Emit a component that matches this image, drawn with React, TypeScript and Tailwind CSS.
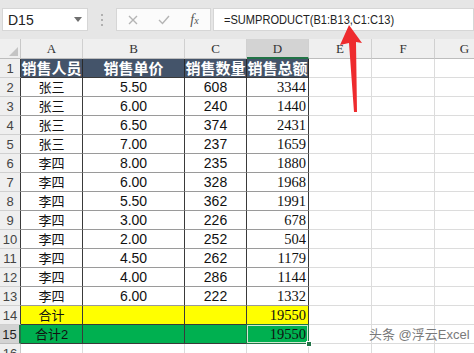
import React from "react";

const A = ["张三", "张三", "张三", "张三", "李四", "李四", "李四", "李四", "李四", "李四", "李四", "李四"];
const B = ["5.50", "6.00", "6.50", "7.00", "8.00", "6.00", "5.50", "3.00", "2.00", "4.50", "4.00", "6.00"];
const C = ["608", "240", "374", "237", "235", "328", "362", "226", "252", "262", "286", "222"];
const D = ["3344", "1440", "2431", "1659", "1880", "1968", "1991", "678", "504", "1179", "1144", "1332"];

const cjk = { fontFamily: '"Liberation Sans", "Noto Sans CJK SC", sans-serif' };
const serif = { fontFamily: '"Liberation Serif", "Noto Sans CJK SC", serif' };
const sans = { fontFamily: '"Liberation Sans", sans-serif' };

function RowHead({ n, table, sel }: { n: number; table: boolean; sel?: boolean }) {
  return (
    <div
      style={sans}
      className={
        "h-[19px] flex items-center justify-center text-[13px] leading-none border-b " +
        (sel
          ? "bg-[#d3d3d3] text-[#222] border-b-[#bdbdbd] border-r-2 border-r-[#217346]"
          : table
          ? "bg-[#efefef] text-[#444] border-b-[#d0d0d0] border-r border-r-[#3a3a3a]"
          : "bg-[#efefef] text-[#444] border-b-[#d0d0d0] border-r border-r-[#c8c8c8]")
      }
    >
      {n}
    </div>
  );
}

function Blank() {
  return <div className="h-[19px] bg-white border-r border-b border-r-[#dcdcdc] border-b-[#dcdcdc]" />;
}

export default function App() {
  const rows: React.ReactNode[] = [];
  // header row 1
  rows.push(<RowHead key="h1" n={1} table />);
  ["销售人员", "销售单价", "销售数量", "销售总额"].forEach((t, i) =>
    rows.push(
      <div
        key={"hd" + i}
        style={cjk}
        className="h-[19px] bg-[#44546a] text-white font-bold text-[15px] leading-none flex items-center justify-center border-r border-b border-r-[#2a2a2a] border-b-[#3a3a3a]"
      >
        {t}
      </div>
    )
  );
  rows.push(<Blank key="h1e" />, <Blank key="h1f" />, <Blank key="h1g" />);

  for (let i = 0; i < 12; i++) {
    rows.push(<RowHead key={"r" + i} n={i + 2} table />);
    rows.push(
      <div key={"a" + i} style={cjk} className="h-[19px] bg-white text-[#111] text-[13px] leading-none flex items-center justify-center border-r border-b border-r-[#3a3a3a] border-b-[#9a9a9a]">
        {A[i]}
      </div>
    );
    rows.push(
      <div key={"b" + i} style={sans} className="h-[19px] bg-white text-[#111] text-[14px] leading-none flex items-center justify-center border-r border-b border-r-[#3a3a3a] border-b-[#9a9a9a]">
        {B[i]}
      </div>
    );
    rows.push(
      <div key={"c" + i} style={sans} className="h-[19px] bg-white text-[#111] text-[14px] leading-none flex items-center justify-center border-r border-b border-r-[#3a3a3a] border-b-[#9a9a9a]">
        {C[i]}
      </div>
    );
    rows.push(
      <div key={"d" + i} style={serif} className="h-[19px] bg-white text-[#111] text-[14.5px] leading-none flex items-center justify-end pr-[2px] border-r border-b border-r-[#3a3a3a] border-b-[#9a9a9a]">
        {D[i]}
      </div>
    );
    rows.push(<Blank key={"e" + i} />, <Blank key={"f" + i} />, <Blank key={"g" + i} />);
  }

  // row 14 yellow
  rows.push(<RowHead key="r14" n={14} table />);
  rows.push(
    <div key="a14" style={cjk} className="h-[19px] bg-[#ffff00] text-[#111] text-[13px] leading-none flex items-center justify-center border-r border-b border-r-[#3a3a3a] border-b-[#3a3a3a]">
      合计
    </div>
  );
  rows.push(<div key="b14" className="h-[19px] bg-[#ffff00] border-r border-b border-r-[#3a3a3a] border-b-[#3a3a3a]" />);
  rows.push(<div key="c14" className="h-[19px] bg-[#ffff00] border-r border-b border-r-[#3a3a3a] border-b-[#3a3a3a]" />);
  rows.push(
    <div key="d14" style={serif} className="h-[19px] bg-[#ffff00] text-[#111] text-[14.5px] leading-none flex items-center justify-end pr-[2px] border-r border-b border-r-[#3a3a3a] border-b-[#3a3a3a]">
      19550
    </div>
  );
  rows.push(<Blank key="e14" />, <Blank key="f14" />, <Blank key="g14" />);

  // row 15 green
  rows.push(<RowHead key="r15" n={15} table sel />);
  rows.push(
    <div key="a15" style={cjk} className="h-[19px] bg-[#00b050] text-[#111] text-[13px] leading-none flex items-center justify-center border-r border-b border-r-[#3a3a3a] border-b-[#3a3a3a]">
      合计2
    </div>
  );
  rows.push(<div key="b15" className="h-[19px] bg-[#00b050] border-r border-b border-r-[#3a3a3a] border-b-[#3a3a3a]" />);
  rows.push(<div key="c15" className="h-[19px] bg-[#00b050] border-r border-b border-r-[#3a3a3a] border-b-[#3a3a3a]" />);
  rows.push(
    <div key="d15" style={serif} className="relative h-[19px] bg-[#00b050] text-[#111] text-[14.5px] leading-none flex items-center justify-end pr-[2px] border-r border-b border-r-[#3a3a3a] border-b-[#3a3a3a]">
      19550
      <div className="absolute left-[-1px] top-[-1px] right-[-1px] bottom-[-1px] border border-[#217346] shadow-[inset_0_0_0_1px_#cfe8cf]" />
      <div className="absolute right-[-4px] bottom-[-4px] w-[6px] h-[6px] bg-[#217346] border border-white z-10" />
    </div>
  );
  rows.push(<Blank key="e15" />, <Blank key="f15" />, <Blank key="g15" />);

  for (let r = 16; r <= 17; r++) {
    rows.push(<RowHead key={"r" + r} n={r} table={false} />);
    for (let c = 0; c < 7; c++) rows.push(<Blank key={"x" + r + c} />);
  }

  const colHead = (l: string, sel?: boolean) => (
    <div
      key={"ch" + l}
      style={serif}
      className={
        "h-[20px] flex items-center justify-center text-[13px] leading-none text-[#333] border-r border-r-[#d0d0d0] " +
        (sel ? "bg-[#d3d3d3] border-b-2 border-b-[#217346]" : "bg-[#efefef] border-b border-b-[#bdbdbd]")
      }
    >
      {l}
    </div>
  );

  return (
    <div className="relative w-[474px] h-[353px] overflow-hidden bg-white">
      {/* formula bar */}
      <div className="h-[39px] bg-[#e6e6e6] flex items-start pt-[8px] pl-[2px]">
        <div className="w-[86px] h-[23px] bg-white border border-[#d6d6d6] flex items-center justify-between pl-[5px] pr-[5px]">
          <span style={sans} className="text-[14px] leading-none text-[#222]">D15</span>
          <svg width="8" height="5" viewBox="0 0 8 5"><path d="M0 0 L8 0 L4 5 Z" fill="#6f6f6f" /></svg>
        </div>
        <div className="w-[28px] h-[23px] flex flex-col items-center justify-center gap-[3px]">
          <div className="w-[2px] h-[2px] bg-[#b0b0b0]" />
          <div className="w-[2px] h-[2px] bg-[#b0b0b0]" />
          <div className="w-[2px] h-[2px] bg-[#b0b0b0]" />
        </div>
        <div className="w-[95px] h-[23px] bg-[#fbfbfb] border border-[#d6d6d6] flex items-center">
          <div className="w-[32px] flex justify-center">
            <svg width="10" height="10" viewBox="0 0 10 10"><path d="M1 1 L9 9 M9 1 L1 9" stroke="#b4b4b4" strokeWidth="1.4" /></svg>
          </div>
          <div className="w-[30px] flex justify-center">
            <svg width="12" height="10" viewBox="0 0 12 10"><path d="M1 5 L4.5 8.5 L11 1" stroke="#b4b4b4" strokeWidth="1.4" fill="none" /></svg>
          </div>
          <div className="w-[31px] flex justify-center">
            <span style={serif} className="italic text-[14px] leading-none text-[#555]">
              f<span className="text-[10px]">x</span>
            </span>
          </div>
        </div>
        <div className="ml-[2px] flex-1 h-[23px] bg-white border border-[#d6d6d6] flex items-center pl-[10px]">
          <span style={sans} className="inline-block origin-left scale-x-[0.82] text-[13.5px] leading-none text-[#222] whitespace-nowrap">
            =SUMPRODUCT(B1:B13,C1:C13)
          </span>
        </div>
      </div>

      {/* sheet */}
      <div className="grid grid-cols-[21px_62px_102px_62px_62px_63px_63px_60px]">
        <div className="h-[20px] bg-[#efefef] border-r border-b border-r-[#c8c8c8] border-b-[#bdbdbd] relative">
          <svg className="absolute right-[2px] bottom-[2px]" width="9" height="9" viewBox="0 0 9 9"><path d="M9 0 L9 9 L0 9 Z" fill="#c4c4c4" /></svg>
        </div>
        {colHead("A")}
        {colHead("B")}
        {colHead("C")}
        {colHead("D", true)}
        {colHead("E")}
        {colHead("F")}
        {colHead("G")}
        {rows}
      </div>

      {/* red arrow */}
      <svg className="absolute left-0 top-0 pointer-events-none" width="474" height="353" viewBox="0 0 474 353">
        <polygon points="349,25 362,43 356,42 357,112 354,112 349,43 340,45" fill="#ee2b2e" />
      </svg>

      {/* watermark */}
      <div
        style={cjk}
        className="absolute left-[369px] top-[328px] text-[13px] leading-none text-[#7a7a7a] [text-shadow:0_0_2px_#fff] whitespace-nowrap"
      >
        头条 @浮云Excel
      </div>
    </div>
  );
}
